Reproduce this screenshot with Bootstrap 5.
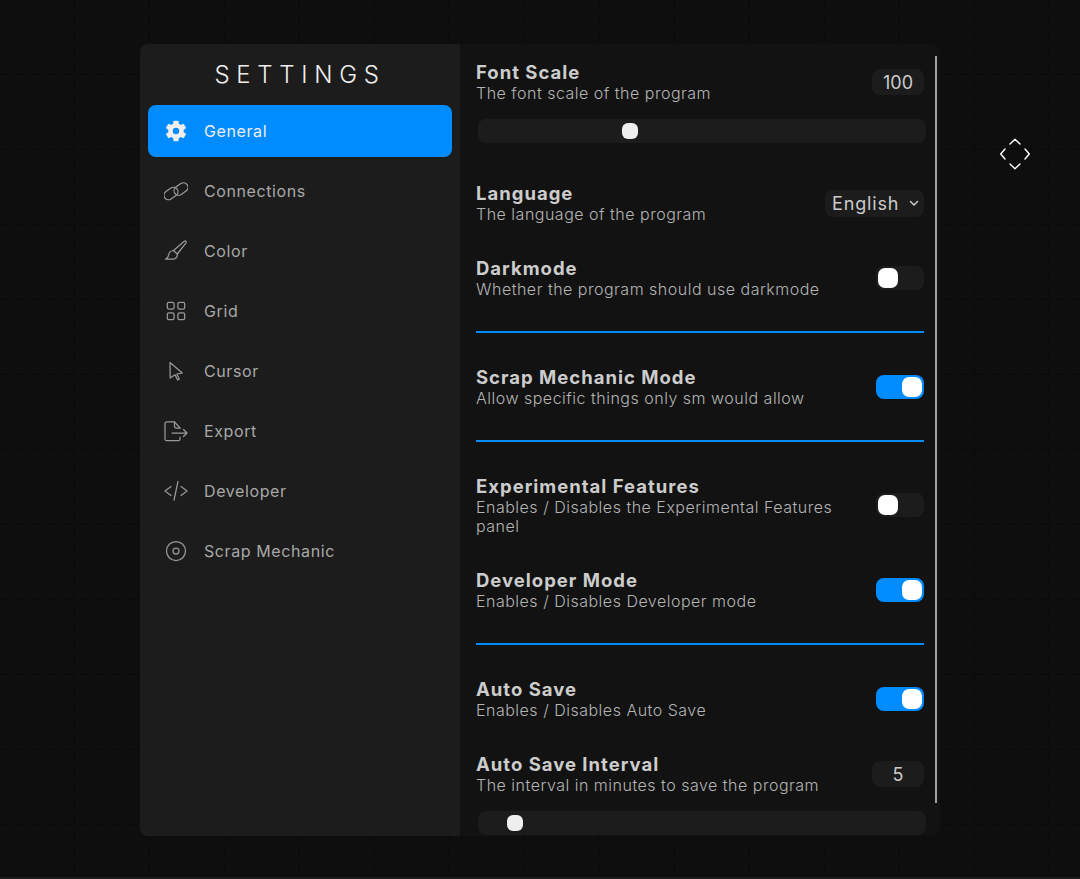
<!doctype html>
<html lang="en">
<head>
<meta charset="utf-8">
<title>Settings</title>
<link href="https://cdn.jsdelivr.net/npm/bootstrap@5.3.0/dist/css/bootstrap.min.css" rel="stylesheet">
<style>
html,body{height:100%;overflow:hidden}
body{background-color:#0e0e0e;font-family:Inter,"Liberation Sans",sans-serif;color:#ccc;
background-image:url("data:image/svg+xml,%3Csvg xmlns='http://www.w3.org/2000/svg' width='75' height='16'%3E%3Crect x='73.5' width='1.5' height='10' fill='%230a0a0a'/%3E%3C/svg%3E"),url("data:image/svg+xml,%3Csvg xmlns='http://www.w3.org/2000/svg' width='16' height='75'%3E%3Crect y='73.5' height='1.5' width='10' fill='%230a0a0a'/%3E%3C/svg%3E")}
.stage{padding:44px 0 0 140px;flex:1 1 auto;min-height:0}
.floorbar{height:2px;background:#1c1c1c;flex:none}
.shell{width:800px;height:792px;border-radius:8px;overflow:hidden;background:#121212}
.side{width:320px;background:#1c1c1c;padding:0 8px}
.side-title{font-size:24px;font-weight:300;letter-spacing:6.7px;line-height:29px;padding:16px 0 16px;color:#eee;text-align:center;margin:0}
.side-link{height:52px;border-radius:8px;color:#a8a8a8;font-size:16px;letter-spacing:.6px;padding:0 0 0 16px;gap:16px}
.side-link svg{width:24px;height:24px;flex:none;fill:none;stroke:#999;stroke-width:1.25;stroke-linecap:round;stroke-linejoin:round}
.side-link.current{background:#008cff;color:#eee}
.side-link.current svg{stroke:none;fill:#eee}
.side-list{gap:8px}
.pane{width:480px;padding:18px 16px 0}
.opt{min-height:41px;margin-bottom:34px}
.opt-last{margin-bottom:16px}
.opt-head{font-size:18.5px;font-weight:700;line-height:20px;margin-bottom:2px;letter-spacing:1px;color:#ccc}
.opt-sub{font-size:16px;font-weight:300;line-height:19px;letter-spacing:.5px;color:#b4b4b4;max-width:370px}
.num{width:52px;height:26px;border-radius:8px;background:#1c1c1c;font-size:18px;color:#ccc;margin-bottom:1px}
.lang{height:27px;width:99px;border-radius:8px;background:#1c1c1c;font-size:18px;color:#ccc;padding:0 5px 0 7px;letter-spacing:.85px;margin-bottom:1px}
.lang svg{width:10px;height:10px;fill:none;stroke:#ccc;stroke-width:1.5;stroke-linecap:round;stroke-linejoin:round}
.swi{width:48px;height:24px;border-radius:8px;background:#1c1c1c;padding:2px;flex:none;margin-bottom:1.2px}
.swi i{display:block;width:20px;height:20px;border-radius:7px;background:#fff}
.swi.on{background:#008cff;justify-content:flex-end}
.track{width:448px;height:24px;margin-left:2px;border-radius:8px;background:#1c1c1c;padding-top:4px}
.knob{width:16px;height:16px;border-radius:6px;background:#eee}
.track-a{margin-bottom:40px}
.rule{height:2px;background:#008cff;opacity:1;border:0;margin:0}
.rule-a{margin:-2px 0 34px}
.scrollthumb{position:absolute;left:795px;top:12px;width:2px;height:747px;background:#a0a0a0}
.movegrip{position:absolute;left:998px;top:137px;width:34px;height:34px;fill:none;stroke:#fff;stroke-width:1.4;stroke-linecap:round;stroke-linejoin:round}
</style>
</head>
<body class="d-flex flex-column">
<div class="stage">
<div class="shell d-flex position-relative">
  <aside class="side">
    <h1 class="side-title">SETTINGS</h1>
    <nav class="side-list d-flex flex-column">
      <div class="side-link current d-flex align-items-center">
        <svg viewBox="0 0 24 24"><g><rect x="9.3" y="1.7" width="5.4" height="5" rx="1"/><rect x="9.3" y="1.7" width="5.4" height="5" rx="1" transform="rotate(60 12 12)"/><rect x="9.3" y="1.7" width="5.4" height="5" rx="1" transform="rotate(120 12 12)"/><rect x="9.3" y="1.7" width="5.4" height="5" rx="1" transform="rotate(180 12 12)"/><rect x="9.3" y="1.7" width="5.4" height="5" rx="1" transform="rotate(240 12 12)"/><rect x="9.3" y="1.7" width="5.4" height="5" rx="1" transform="rotate(300 12 12)"/></g><circle cx="12" cy="12" r="5.5" fill="none" stroke="#eee" stroke-width="4.6"/></svg>
        <span>General</span>
      </div>
      <div class="side-link d-flex align-items-center">
        <svg viewBox="0 0 24 24"><rect x="-.5" y="10" width="15" height="9" rx="4.500" transform="rotate(-35 7 14.500)"/><rect x="9.500" y="5.500" width="15" height="9" rx="4.500" transform="rotate(-35 17 10)"/></svg>
        <span>Connections</span>
      </div>
      <div class="side-link d-flex align-items-center">
        <svg viewBox="0 0 24 24"><path d="M9.500 11.500 20.300 2.200c1.200-.9 2.600.4 1.700 1.700L13.300 15"/><path d="M9.500 11.500c-2.800.2-4.300 1.900-4.800 4.300-.3 1.800-1.200 3.600-3.200 4.400h7c3 0 5.200-2 4.800-5.200z"/></svg>
        <span>Color</span>
      </div>
      <div class="side-link d-flex align-items-center">
        <svg viewBox="0 0 24 24"><rect x="3.300" y="3.300" width="6.800" height="6.800" rx="1.600"/><rect x="13.900" y="3.300" width="6.800" height="6.800" rx="1.600"/><rect x="3.300" y="13.900" width="6.800" height="6.800" rx="1.600"/><rect x="13.900" y="13.900" width="6.800" height="6.800" rx="1.600"/></svg>
        <span>Grid</span>
      </div>
      <div class="side-link d-flex align-items-center">
        <svg viewBox="0 0 24 24"><path d="M6 3.500 18.300 14l-5.500 1 2.500 5.200-1.700.8-2.600-5.200-4.800 3.200z"/></svg>
        <span>Cursor</span>
      </div>
      <div class="side-link d-flex align-items-center">
        <svg viewBox="0 0 24 24"><path d="M16 9 10.500 2.800H2.800A1.800 1.800 0 0 0 1 4.600v15.300a1.800 1.800 0 0 0 1.800 1.800h11.400a1.800 1.800 0 0 0 1.800-1.800V18"/><path d="M10.500 2.800v4.700A1.500 1.500 0 0 0 12 9h4"/><path d="M8 14h15M19.500 10.500 23 14l-3.500 3.500"/></svg>
        <span>Export</span>
      </div>
      <div class="side-link d-flex align-items-center">
        <svg viewBox="0 0 24 24"><path d="M7 7.500 1 12l6 4.500M17 7.500l6 4.500-6 4.500M14 2.500 10 21"/></svg>
        <span>Developer</span>
      </div>
      <div class="side-link d-flex align-items-center">
        <svg viewBox="0 0 24 24"><circle cx="12" cy="12" r="9.500"/><circle cx="12" cy="12" r="3"/></svg>
        <span>Scrap Mechanic</span>
      </div>
    </nav>
  </aside>
  <main class="pane">
    <div class="opt opt-last d-flex justify-content-between align-items-center">
      <div><div class="opt-head">Font Scale</div><div class="opt-sub">The font scale of the program</div></div>
      <div class="num d-flex align-items-center justify-content-center">100</div>
    </div>
    <div class="track track-a"><div class="knob" style="margin-left:144px"></div></div>
    <div class="opt d-flex justify-content-between align-items-center">
      <div><div class="opt-head">Language</div><div class="opt-sub">The language of the program</div></div>
      <div class="lang d-flex align-items-center justify-content-between"><span>English</span><svg viewBox="0 0 10 10"><path d="M1.500 3.500 5 7l3.500-3.500"/></svg></div>
    </div>
    <div class="opt d-flex justify-content-between align-items-center">
      <div><div class="opt-head">Darkmode</div><div class="opt-sub">Whether the program should use darkmode</div></div>
      <div class="swi d-flex"><i></i></div>
    </div>
    <hr class="rule rule-a">
    <div class="opt d-flex justify-content-between align-items-center">
      <div><div class="opt-head">Scrap Mechanic Mode</div><div class="opt-sub">Allow specific things only sm would allow</div></div>
      <div class="swi on d-flex"><i></i></div>
    </div>
    <hr class="rule rule-a">
    <div class="opt d-flex justify-content-between align-items-center">
      <div><div class="opt-head">Experimental Features</div><div class="opt-sub">Enables / Disables the Experimental Features panel</div></div>
      <div class="swi d-flex"><i></i></div>
    </div>
    <div class="opt d-flex justify-content-between align-items-center">
      <div><div class="opt-head">Developer Mode</div><div class="opt-sub">Enables / Disables Developer mode</div></div>
      <div class="swi on d-flex"><i></i></div>
    </div>
    <hr class="rule rule-a">
    <div class="opt d-flex justify-content-between align-items-center">
      <div><div class="opt-head">Auto Save</div><div class="opt-sub">Enables / Disables Auto Save</div></div>
      <div class="swi on d-flex"><i></i></div>
    </div>
    <div class="opt opt-last d-flex justify-content-between align-items-center">
      <div><div class="opt-head">Auto Save Interval</div><div class="opt-sub">The interval in minutes to save the program</div></div>
      <div class="num d-flex align-items-center justify-content-center">5</div>
    </div>
    <div class="track"><div class="knob" style="margin-left:29px"></div></div>
  </main>
  <div class="scrollthumb"></div>
</div>
</div>
<svg class="movegrip" viewBox="0 0 34 34"><path d="M12 7 17 2.300 22 7M12 27l5 4.700 5-4.700M7 12l-4.300 5L7 22M27 12l4.300 5-4.300 5"/></svg>
<div class="floorbar"></div>
<script src="https://cdn.jsdelivr.net/npm/bootstrap@5.3.0/dist/js/bootstrap.bundle.min.js"></script>
</body>
</html>
